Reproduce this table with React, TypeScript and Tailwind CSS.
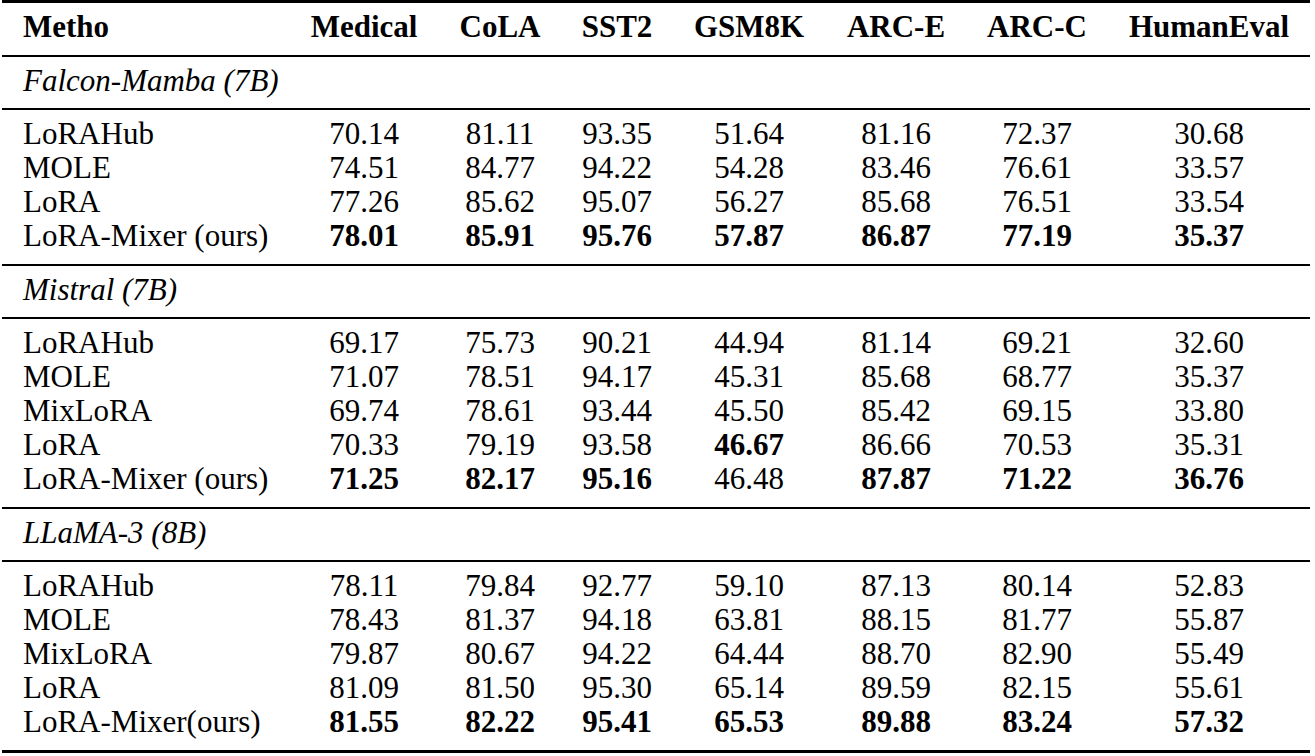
import React from "react";

const HEADERS = ["Metho", "Medical", "CoLA", "SST2", "GSM8K", "ARC-E", "ARC-C", "HumanEval"];

// a leading "*" marks a bold (best) value
const GROUPS: { title: string; rows: string[][] }[] = [
  {
    title: "Falcon-Mamba (7B)",
    rows: [
      ["LoRAHub", "70.14", "81.11", "93.35", "51.64", "81.16", "72.37", "30.68"],
      ["MOLE", "74.51", "84.77", "94.22", "54.28", "83.46", "76.61", "33.57"],
      ["LoRA", "77.26", "85.62", "95.07", "56.27", "85.68", "76.51", "33.54"],
      ["LoRA-Mixer (ours)", "*78.01", "*85.91", "*95.76", "*57.87", "*86.87", "*77.19", "*35.37"],
    ],
  },
  {
    title: "Mistral (7B)",
    rows: [
      ["LoRAHub", "69.17", "75.73", "90.21", "44.94", "81.14", "69.21", "32.60"],
      ["MOLE", "71.07", "78.51", "94.17", "45.31", "85.68", "68.77", "35.37"],
      ["MixLoRA", "69.74", "78.61", "93.44", "45.50", "85.42", "69.15", "33.80"],
      ["LoRA", "70.33", "79.19", "93.58", "*46.67", "86.66", "70.53", "35.31"],
      ["LoRA-Mixer (ours)", "*71.25", "*82.17", "*95.16", "46.48", "*87.87", "*71.22", "*36.76"],
    ],
  },
  {
    title: "LLaMA-3 (8B)",
    rows: [
      ["LoRAHub", "78.11", "79.84", "92.77", "59.10", "87.13", "80.14", "52.83"],
      ["MOLE", "78.43", "81.37", "94.18", "63.81", "88.15", "81.77", "55.87"],
      ["MixLoRA", "79.87", "80.67", "94.22", "64.44", "88.70", "82.90", "55.49"],
      ["LoRA", "81.09", "81.50", "95.30", "65.14", "89.59", "82.15", "55.61"],
      ["LoRA-Mixer(ours)", "*81.55", "*82.22", "*95.41", "*65.53", "*89.88", "*83.24", "*57.32"],
    ],
  },
];

const grid = "grid grid-cols-[288px_148px_124px_110px_154px_140px_142px_202px]";

function Cell({ value, index, header }: { value: string; index: number; header?: boolean }) {
  const bold = header || value.startsWith("*");
  const text = value.replace(/^\*/, "");
  return (
    <div className={`${index === 0 ? "pl-[21px] text-left" : "text-center"} ${bold ? "font-bold" : ""} whitespace-nowrap`}>
      {text}
    </div>
  );
}

export default function App() {
  return (
    <div className="h-[756px] w-[1315px] bg-white text-black">
      <div
        className="ml-[2px] w-[1308px] text-[31px] leading-[34px]"
        style={{ fontFamily: '"Liberation Serif", "Times New Roman", serif' }}
      >
        <div className="h-[3px] bg-black" />
        <div className={`${grid} pt-[7px] pb-[11px]`}>
          {HEADERS.map((h, i) => (
            <Cell key={h} value={h} index={i} header />
          ))}
        </div>
        {GROUPS.map((group) => (
          <div key={group.title}>
            <div className="h-[2px] bg-black" />
            <div className="pl-[21px] pt-[7px] pb-[10px] italic">{group.title}</div>
            <div className="h-[2px] bg-black" />
            <div className="pt-[7px] pb-[11px]">
              {group.rows.map((row) => (
                <div key={row[0]} className={grid}>
                  {row.map((v, i) => (
                    <Cell key={i} value={v} index={i} />
                  ))}
                </div>
              ))}
            </div>
          </div>
        ))}
        <div className="h-[3px] bg-black" />
      </div>
    </div>
  );
}
